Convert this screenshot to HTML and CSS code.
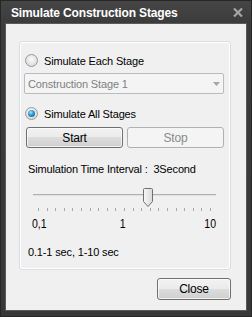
FILE: index.html
```html
<!DOCTYPE html>
<html>
<head>
<meta charset="utf-8">
<link rel="stylesheet" href="styles.css">
</head>
<body>
<div class="window">
  <div class="titlebar">
    <span class="title">Simulate Construction Stages</span>
    <svg class="xbtn" width="10" height="9" viewBox="0 0 10 9"><path d="M1 0.5 L9 8.5 M9 0.5 L1 8.5" stroke="#a3a3a3" stroke-width="2.2" fill="none"/></svg>
  </div>
  <div class="frame">
    <div class="client">
      <div class="group">
        <div class="radio r1"><span class="dot"></span><span>Simulate Each Stage</span></div>
        <div class="combo"><span>Construction Stage 1</span><svg width="7" height="4" viewBox="0 0 7 4"><path d="M0 0 H7 L3.5 4 Z" fill="#a6a6a6"/></svg></div>
        <div class="radio r2"><span class="dot checked"></span><span>Simulate All Stages</span></div>
        <div class="btnrow"><div class="btn">Start</div><div class="btn disabled">Stop</div></div>
        <div class="label">Simulation Time Interval :&nbsp; 3Second</div>
        <div class="slider">
          <div class="track"></div>
          <svg class="thumb" width="10" height="19" viewBox="0 0 10 19">
            <defs><linearGradient id="tg" x1="0" y1="0" x2="1" y2="0"><stop offset="0" stop-color="#f7f7f7"/><stop offset="1" stop-color="#d9d9d9"/></linearGradient></defs>
            <path d="M1.5 0.5 H8.5 Q9.5 0.5 9.5 1.5 V13.5 L5 18.5 L0.5 13.5 V1.5 Q0.5 0.5 1.5 0.5 Z" fill="url(#tg)" stroke="#707070"/>
          </svg>
          <div class="ticks"><i></i><i></i><i></i><i></i><i></i><i></i><i></i><i></i><i></i><i></i><i></i><i></i><i></i><i></i><i></i><i></i><i></i><i></i><i></i><i></i><i></i></div>
        </div>
        <div class="scale"><span class="s-min">0,1</span><span class="s-mid">1</span><span class="s-max">10</span></div>
        <div class="note">0.1-1 sec, 1-10 sec</div>
      </div>
      <div class="btn close">Close</div>
    </div>
  </div>
</div>
</body>
</html>
```
FILE: styles.css
```css
* { box-sizing: border-box; }
html, body { margin: 0; padding: 0; }
body {
  width: 252px; height: 317px; overflow: hidden;
  font-family: "Liberation Sans", Arial, sans-serif;
  font-size: 11px; letter-spacing: -0.15px; color: #000;
  background: #3a3a3a;
}
.window {
  width: 252px; height: 317px;
  display: flex; flex-direction: column;
  background: linear-gradient(#464646, #3b3b3b 24px, #383838);
  box-shadow: inset 0 0 0 1px #262626;
}
.titlebar {
  height: 24px; flex: none;
  display: flex; align-items: center; justify-content: space-between;
  padding: 2px 9px 0 11px;
  color: #fff; font-weight: bold; font-size: 12px;
}
.xbtn { margin-top: -1px; }
.frame { flex: 1; display: flex; padding: 0 6px 7px 6px; }
.client {
  flex: 1; background: #f0f0f0;
  box-shadow: 0 0 0 1px #5a5a5a;
  padding: 17px 15px 0 13px;
  display: flex; flex-direction: column;
}
.group {
  height: 229px; flex: none;
  border: 1px solid #d5dfe5; border-radius: 3px;
  box-shadow: inset 0 0 0 1px #fff;
  padding-left: 4px;
  display: flex; flex-direction: column;
}
.radio { display: flex; align-items: center; gap: 6px; height: 13px; margin-left: 1px; line-height: 14px; }
.r1 { margin-top: 12px; }
.r2 { margin-top: 13px; }
.dot {
  width: 13px; height: 13px; border-radius: 50%; flex: none;
  border: 1px solid #9a9a9a;
  background: radial-gradient(circle at 50% 40%, #fbfbfb 0, #e9e9e9 45%, #cdcdcd 100%);
  display: flex; align-items: center; justify-content: center;
}
.dot.checked::after {
  content: ""; width: 7px; height: 7px; border-radius: 50%;
  background: radial-gradient(circle at 40% 35%, #a8e4fb 0, #2b95d6 45%, #0c4c82 100%);
}
.combo {
  margin-top: 6px; width: 200px; height: 21px;
  border: 1px solid #b8bcbf; border-radius: 2px;
  background: #f4f4f4; color: #7f7f7f;
  display: flex; align-items: center; justify-content: space-between;
  padding: 0 3px 0 3px;
}
.btnrow { margin-top: 7px; margin-left: 2px; display: flex; gap: 4px; }
.btn {
  width: 97px; height: 21px;
  border: 1px solid #707070; border-radius: 3px;
  background: linear-gradient(#f2f2f2 0%, #ebebeb 50%, #dddddd 50%, #cfcfcf 100%);
  box-shadow: inset 0 0 0 1px rgba(255,255,255,0.7);
  display: flex; align-items: center; justify-content: center;
  font-size: 12px; letter-spacing: -0.2px;
}
.btn.disabled {
  border-color: #adb2b5; background: #f4f4f4; box-shadow: none; color: #8a8a8a;
}
.label { margin-top: 14px; margin-left: 4px; line-height: 14px; }
.slider { margin-top: 10px; height: 26px; position: relative; display: flex; flex-direction: column; }
.track {
  margin-top: 8px; margin-left: 9px; width: 183px; height: 2px;
  border-top: 1px solid #b0b0b0; border-bottom: 1px solid #e2e2e2;
}
.thumb { position: absolute; left: 119px; top: 2px; }
.ticks { margin-top: 12px; margin-left: 14px; width: 173px; height: 3px; display: flex; justify-content: space-between; }
.ticks i { width: 1px; height: 3px; background: #a8a8a8; }
.scale {
  margin-top: 5px; margin-left: 8px; width: 184px; height: 14px; line-height: 14px;
  display: flex; justify-content: space-between;
  font-size: 13.5px; letter-spacing: 0;
}
.scale span { display: inline-block; transform: scaleX(0.78); }
.s-min { transform-origin: left center; }
.s-mid { transform-origin: center; margin-right: 6px; }
.s-max { transform-origin: right center; }
.note { margin-top: 14px; margin-left: 4px; line-height: 14px; }
.close { margin-top: 8px; align-self: flex-end; width: 74px; height: 22px; }
```
